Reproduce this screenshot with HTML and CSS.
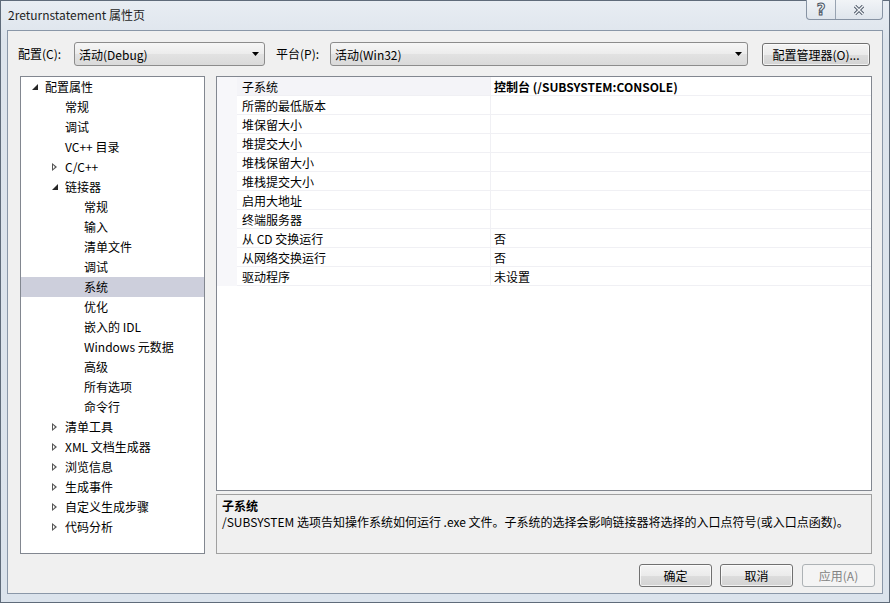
FILE: index.html
```html
<!DOCTYPE html>
<html lang="zh-CN">
<head>
  <meta charset="UTF-8" />
  <title>2returnstatement 属性页</title>
  <link rel="stylesheet" href="styles.css">
</head>
<body>

  <div class="window">
    <div class="titlebar">
      <span class="title">2returnstatement 属性页</span>
      <div class="caption-buttons">
        <span class="cap cap-help">?</span>
        <span class="cap cap-close">
          <svg width="12" height="10" viewBox="0 0 12 10">
            <path d="M2 1 L10 9 M10 1 L2 9" stroke="#4a5564" stroke-width="3.2" fill="none" />
            <path d="M2 1 L10 9 M10 1 L2 9" stroke="#f4f6f9" stroke-width="1.4" fill="none" />
          </svg>
        </span>
      </div>
    </div>

    <div class="client">
      <div class="toolbar">
        <span class="lbl lbl-config">配置(C):</span>
        <div class="combo combo-config">
          <span>活动(Debug)</span>
          <svg class="drop" width="7" height="4" viewBox="0 0 7 4"><path d="M0 0 H7 L3.5 4 Z" fill="#000" /></svg>
        </div>
        <span class="lbl lbl-platform">平台(P):</span>
        <div class="combo combo-platform">
          <span>活动(Win32)</span>
          <svg class="drop" width="7" height="4" viewBox="0 0 7 4"><path d="M0 0 H7 L3.5 4 Z" fill="#000" /></svg>
        </div>
        <button class="btn btn-manager">配置管理器(O)...</button>
      </div>

      <div class="main">
        <ul class="tree">
          <li class="lvl0"><span class="tw exp"></span>配置属性</li>
          <li class="lvl1"><span class="tw"></span>常规</li>
          <li class="lvl1"><span class="tw"></span>调试</li>
          <li class="lvl1"><span class="tw"></span>VC++ 目录</li>
          <li class="lvl1"><span class="tw col"></span>C/C++</li>
          <li class="lvl1"><span class="tw exp"></span>链接器</li>
          <li class="lvl2"><span class="tw"></span>常规</li>
          <li class="lvl2"><span class="tw"></span>输入</li>
          <li class="lvl2"><span class="tw"></span>清单文件</li>
          <li class="lvl2"><span class="tw"></span>调试</li>
          <li class="lvl2 selected"><span class="tw"></span>系统</li>
          <li class="lvl2"><span class="tw"></span>优化</li>
          <li class="lvl2"><span class="tw"></span>嵌入的 IDL</li>
          <li class="lvl2"><span class="tw"></span>Windows 元数据</li>
          <li class="lvl2"><span class="tw"></span>高级</li>
          <li class="lvl2"><span class="tw"></span>所有选项</li>
          <li class="lvl2"><span class="tw"></span>命令行</li>
          <li class="lvl1"><span class="tw col"></span>清单工具</li>
          <li class="lvl1"><span class="tw col"></span>XML 文档生成器</li>
          <li class="lvl1"><span class="tw col"></span>浏览信息</li>
          <li class="lvl1"><span class="tw col"></span>生成事件</li>
          <li class="lvl1"><span class="tw col"></span>自定义生成步骤</li>
          <li class="lvl1"><span class="tw col"></span>代码分析</li>
        </ul>

        <div class="right">
          <div class="grid">
            <div class="row active"><span class="gutter"></span><span class="name">子系统</span><span class="value bold">控制台 (/SUBSYSTEM:CONSOLE)</span></div>
            <div class="row"><span class="gutter"></span><span class="name">所需的最低版本</span><span class="value"></span></div>
            <div class="row"><span class="gutter"></span><span class="name">堆保留大小</span><span class="value"></span></div>
            <div class="row"><span class="gutter"></span><span class="name">堆提交大小</span><span class="value"></span></div>
            <div class="row"><span class="gutter"></span><span class="name">堆栈保留大小</span><span class="value"></span></div>
            <div class="row"><span class="gutter"></span><span class="name">堆栈提交大小</span><span class="value"></span></div>
            <div class="row"><span class="gutter"></span><span class="name">启用大地址</span><span class="value"></span></div>
            <div class="row"><span class="gutter"></span><span class="name">终端服务器</span><span class="value"></span></div>
            <div class="row"><span class="gutter"></span><span class="name">从 CD 交换运行</span><span class="value">否</span></div>
            <div class="row"><span class="gutter"></span><span class="name">从网络交换运行</span><span class="value">否</span></div>
            <div class="row"><span class="gutter"></span><span class="name">驱动程序</span><span class="value">未设置</span></div>
          </div>
          <div class="desc">
            <div class="desc-title">子系统</div>
            <div class="desc-text">/SUBSYSTEM 选项告知操作系统如何运行 .exe 文件。子系统的选择会影响链接器将选择的入口点符号(或入口点函数)。</div>
          </div>
        </div>
      </div>

      <div class="footer">
        <button class="btn">确定</button>
        <button class="btn">取消</button>
        <button class="btn" disabled>应用(A)</button>
      </div>
    </div>
  </div>

</body>
</html>
```

FILE: styles.css
```css
* {
  box-sizing: border-box;
}

body {
  margin: 0;
  font-family: "Noto Sans CJK SC", "Noto Sans", sans-serif;
  font-size: 12px;
  color: #000;
  background: #fff;
}

.window {
  width: 890px;
  height: 603px;
  display: flex;
  flex-direction: column;
  border: 1px solid #5f6b7a;
  background: linear-gradient(to bottom, #e8edf3, #dde4ec 40px, #dbe3ec);
}

/* title bar */
.titlebar {
  height: 29px;
  display: flex;
  align-items: flex-start;
  padding: 0 6px 0 7px;
}

.title {
  line-height: 28px;
  color: #1e1e1e;
}

.caption-buttons {
  margin-left: auto;
  margin-top: -1px;
  display: flex;
  height: 20px;
  border: 1px solid #8793a3;
  border-top: none;
  border-radius: 0 0 4px 4px;
  background: linear-gradient(to bottom, #f1f4f7, #dfe5ec);
  overflow: hidden;
}

.cap {
  display: flex;
  align-items: center;
  justify-content: center;
  height: 100%;
}

.cap-help {
  width: 29px;
  border-right: 1px solid #98a3b1;
  font-size: 15px;
  font-weight: bold;
  color: #f4f6f9;
  -webkit-text-stroke: 1px #4a5564;
  font-family: "DejaVu Sans", sans-serif;
  line-height: 18px;
}

.cap-close {
  width: 46px;
}

/* client area */
.client {
  height: 564px;
  margin: 0 6px;
  border: 1px solid #8a97a8;
  background: #f0f0f0;
  padding: 11px 7px 0 10px;
  display: flex;
  flex-direction: column;
}

.toolbar {
  height: 24px;
  display: flex;
  align-items: center;
  margin-right: 3px;
}

.lbl {
  line-height: 24px;
}

.lbl-config {
  width: 56px;
}

.lbl-platform {
  width: 54px;
  margin-left: 11px;
}

.combo {
  height: 24px;
  display: flex;
  align-items: center;
  padding: 0 5px 0 4px;
  border: 1px solid #8c8c8c;
  border-radius: 3px;
  background: linear-gradient(to bottom, #f6f6f6, #ececec 50%, #e2e2e2 50%, #dadada);
}

.combo span {
  flex: 1;
}

.combo-config {
  width: 191px;
}

.combo-platform {
  flex: 1;
}

.btn {
  height: 23px;
  font-family: inherit;
  font-size: 12px;
  color: #000;
  border: 1px solid #707070;
  border-radius: 3px;
  background: linear-gradient(to bottom, #f4f4f4, #ebebeb 50%, #dddddd 50%, #d3d3d3);
  box-shadow: inset 0 0 0 1px rgba(255,255,255,0.7);
  padding: 0;
}

.btn:disabled {
  color: #838383;
  border-color: #adb2b5;
  background: #f4f4f4;
  box-shadow: none;
}

.btn-manager {
  width: 108px;
  margin-left: 14px;
  margin-right: 2px;
}

/* main split */
.main {
  height: 478px;
  margin-top: 10px;
  margin-right: 3px;
  display: flex;
}

.tree {
  width: 185px;
  margin: 0 0 0 2px;
  padding: 0;
  list-style: none;
  background: #fff;
  border: 1px solid #828790;
}

.tree li {
  height: 20px;
  line-height: 20px;
  display: flex;
  align-items: center;
  white-space: nowrap;
}

.tree .lvl0 { padding-left: 4px; }
.tree .lvl1 { padding-left: 24px; }
.tree .lvl2 { padding-left: 43px; }

.tree li.selected {
  background: #cdcfdc;
}

.tw {
  width: 20px;
  height: 20px;
  flex: none;
  position: relative;
}

.tw.exp::before {
  content: "";
  position: absolute;
  left: 7px;
  top: 7px;
  border-style: solid;
  border-width: 0 0 6px 6px;
  border-color: transparent transparent #262626 transparent;
}

.tw.col::before {
  content: "";
  position: absolute;
  left: 7px;
  top: 6px;
  border-style: solid;
  border-width: 4px 0 4px 5px;
  border-color: transparent transparent transparent #555;
}

.tw.col::after {
  content: "";
  position: absolute;
  left: 8px;
  top: 8px;
  border-style: solid;
  border-width: 2px 0 2px 2.5px;
  border-color: transparent transparent transparent #fff;
}

.right {
  flex: 1;
  margin-left: 11px;
  display: flex;
  flex-direction: column;
}

.grid {
  height: 415px;
  background: #fff;
  border: 1px solid #828790;
}

.row {
  display: flex;
  height: 19px;
}

.gutter {
  width: 20px;
  background: #f7f7fa;
}

.name,
.value {
  padding-top: 1px;
  line-height: 18px;
  border-bottom: 1px solid #f0f0f4;
  white-space: nowrap;
}

.name {
  width: 254px;
  padding-left: 5px;
  border-right: 1px solid #f0f0f4;
}

.value {
  flex: 1;
  padding-left: 3px;
}

.row.active .name {
  background: #f4f4f8;
}

.bold {
  font-weight: bold;
}

.desc {
  height: 60px;
  margin-top: 3px;
  border: 1px solid #a0a0a0;
  background: #f0f0f0;
  padding: 3px 5px;
  line-height: 16px;
}

.desc-title {
  font-weight: bold;
}

.desc-text {
  white-space: nowrap;
}

.footer {
  margin-top: 10px;
  display: flex;
  justify-content: flex-end;
  gap: 8px;
}

.footer .btn {
  width: 73px;
}

.footer .btn:last-child {
  margin-left: 1px;
}
```
